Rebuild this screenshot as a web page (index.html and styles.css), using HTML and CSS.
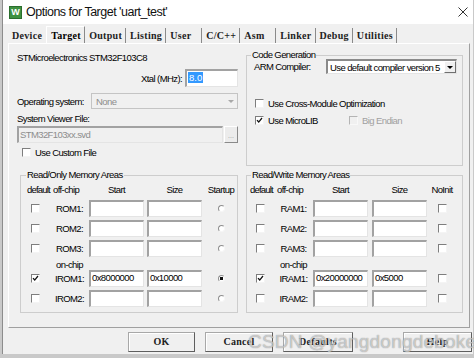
FILE: index.html
```html
<!DOCTYPE html>
<html lang="en">
<head>
    <meta charset="UTF-8">
    <title>Options for Target 'uart_test'</title>
    <link rel="stylesheet" href="styles.css">
</head>
<body>
    <div class="dialog">
        <header class="titlebar">
            <span class="app-icon">W</span>
            <span class="title">Options for Target 'uart_test'</span>
            <svg class="close" width="10" height="10" viewBox="0 0 10 10">
                <path d="M0.5 0.5 L9.5 9.5 M9.5 0.5 L0.5 9.5" stroke="#333" stroke-width="1" fill="none"/>
            </svg>
        </header>

        <nav class="tabs">
            <span class="tab">Device</span>
            <span class="tab active">Target</span>
            <span class="tab">Output</span>
            <span class="tab">Listing</span>
            <span class="tab">User</span>
            <span class="tab">C/C++</span>
            <span class="tab">Asm</span>
            <span class="tab">Linker</span>
            <span class="tab">Debug</span>
            <span class="tab">Utilities</span>
        </nav>

        <section class="panel">
            <div class="top-row">
                <div class="device-col">
                    <div class="device-name">STMicroelectronics STM32F103C8</div>
                    <div class="xtal-row">
                        <span>Xtal (MHz):</span>
                        <span class="field xtal"><span class="selected">8.0</span></span>
                    </div>
                    <div class="os-row">
                        <span>Operating system:</span>
                        <span class="combo disabled">None<span class="combo-btn"><i class="arrow"></i></span></span>
                    </div>
                    <div class="svd-label">System Viewer File:</div>
                    <div class="svd-row">
                        <span class="field disabled svd">STM32F103xx.svd</span>
                        <span class="browse">...</span>
                    </div>
                    <div class="check-row custom">
                        <span class="check"></span>Use Custom File
                    </div>
                </div>

                <fieldset class="group codegen">
                    <legend>Code Generation</legend>
                    <div class="cg-row">
                        <span class="cg-label">ARM Compiler:</span>
                        <span class="combo compiler">Use default compiler version 5<span class="combo-btn"><i class="arrow"></i></span></span>
                    </div>
                    <div class="check-row cross">
                        <span class="check"></span>Use Cross-Module Optimization
                    </div>
                    <div class="opt-pair">
                        <div class="check-row">
                            <span class="check on"><svg viewBox="0 0 9 9"><path d="M1.3 4 L3.5 6.5 L7.7 1.3" stroke="#111" stroke-width="1.7" fill="none"/></svg></span>Use MicroLIB
                        </div>
                        <div class="check-row off">
                            <span class="check dim"></span>Big Endian
                        </div>
                    </div>
                </fieldset>
            </div>

            <div class="mem-row">
                <fieldset class="group mem rom">
                    <legend>Read/Only Memory Areas</legend>
                    <div class="mline head">
                        <span class="h-default">default</span>
                        <span class="h-off">off-chip</span>
                        <span class="h-col">Start</span>
                        <span class="h-col">Size</span>
                        <span class="h-last">Startup</span>
                    </div>
                    <div class="mline first">
                        <span class="check"></span><span class="mlabel">ROM1:</span>
                        <span class="field"></span><span class="field"></span><span class="radio"></span>
                    </div>
                    <div class="mline">
                        <span class="check"></span><span class="mlabel">ROM2:</span>
                        <span class="field"></span><span class="field"></span><span class="radio"></span>
                    </div>
                    <div class="mline">
                        <span class="check"></span><span class="mlabel">ROM3:</span>
                        <span class="field"></span><span class="field"></span><span class="radio"></span>
                    </div>
                    <div class="mline onchip"><span></span><span class="mlabel">on-chip</span></div>
                    <div class="mline tight">
                        <span class="check on"><svg viewBox="0 0 9 9"><path d="M1.3 4 L3.5 6.5 L7.7 1.3" stroke="#111" stroke-width="1.7" fill="none"/></svg></span><span class="mlabel">IROM1:</span>
                        <span class="field">0x8000000</span><span class="field">0x10000</span><span class="radio on"></span>
                    </div>
                    <div class="mline">
                        <span class="check"></span><span class="mlabel">IROM2:</span>
                        <span class="field"></span><span class="field"></span><span class="radio"></span>
                    </div>
                </fieldset>

                <fieldset class="group mem ram">
                    <legend>Read/Write Memory Areas</legend>
                    <div class="mline head">
                        <span class="h-default">default</span>
                        <span class="h-off">off-chip</span>
                        <span class="h-col">Start</span>
                        <span class="h-col">Size</span>
                        <span class="h-last">NoInit</span>
                    </div>
                    <div class="mline first">
                        <span class="check"></span><span class="mlabel">RAM1:</span>
                        <span class="field"></span><span class="field"></span><span class="check"></span>
                    </div>
                    <div class="mline">
                        <span class="check"></span><span class="mlabel">RAM2:</span>
                        <span class="field"></span><span class="field"></span><span class="check"></span>
                    </div>
                    <div class="mline">
                        <span class="check"></span><span class="mlabel">RAM3:</span>
                        <span class="field"></span><span class="field"></span><span class="check"></span>
                    </div>
                    <div class="mline onchip"><span></span><span class="mlabel">on-chip</span></div>
                    <div class="mline tight">
                        <span class="check on"><svg viewBox="0 0 9 9"><path d="M1.3 4 L3.5 6.5 L7.7 1.3" stroke="#111" stroke-width="1.7" fill="none"/></svg></span><span class="mlabel">IRAM1:</span>
                        <span class="field">0x20000000</span><span class="field">0x5000</span><span class="check"></span>
                    </div>
                    <div class="mline">
                        <span class="check"></span><span class="mlabel">IRAM2:</span>
                        <span class="field"></span><span class="field"></span><span class="check"></span>
                    </div>
                </fieldset>
            </div>
        </section>

        <footer class="buttons">
            <span class="btn ok">OK</span>
            <span class="btn cancel">Cancel</span>
            <span class="btn defaults">Defaults</span>
            <span class="btn help">Help</span>
            <span class="watermark">CSDN @yangdongdeboke</span>
        </footer>
    </div>
</body>
</html>
```

FILE: styles.css
```css
* {
    box-sizing: border-box;
    margin: 0;
    padding: 0;
}

body {
    background: #c9c9c9;
    font-family: 'Liberation Sans', Arial, sans-serif;
    font-size: 9.5px;
    letter-spacing: -0.6px;
    color: #000;
}

.dialog {
    width: 471px;
    height: 354px;
    margin-left: 2px;
    border-left: 1px solid #8c8c8c;
    background: #f0f0f0;
    display: flex;
    flex-direction: column;
}

/* Title bar */
.titlebar {
    height: 24px;
    flex: none;
    background: #fff;
    display: flex;
    align-items: center;
    padding: 0 5px 0 6px;
}

.app-icon {
    width: 13px;
    height: 13px;
    background: #3f9141;
    border: 1px solid #2b6e2d;
    color: #fff;
    font: bold 9px 'Liberation Sans', sans-serif;
    letter-spacing: 0;
    display: flex;
    align-items: center;
    justify-content: center;
}

.title {
    margin-left: 4px;
    font-size: 12.5px;
    letter-spacing: -0.5px;
    color: #111;
}

.close {
    margin-left: auto;
}

/* Tabs */
.tabs {
    height: 19px;
    flex: none;
    display: flex;
    align-items: flex-end;
    padding-left: 5px;
    font-family: 'Liberation Serif', serif;
    font-weight: bold;
    font-size: 10px;
    letter-spacing: 0.3px;
}

.tab {
    height: 15px;
    line-height: 15px;
    min-width: 36px;
    padding: 0 3px 0 4px;
    border-right: 1px solid #8a8a8a;
    color: #222;
}

.tab:first-child {
    border-right-color: transparent;
}

.tab.active {
    height: 17px;
    line-height: 17px;
    min-width: 39px;
    border-left: 1px solid #fff;
    border-top: 1px solid #fff;
    color: #000;
}

/* Panel */
.panel {
    flex: none;
    margin-left: 5px;
    width: 462px;
    height: 285px;
    border: 1px solid;
    border-color: #fff #a0a0a0 #a0a0a0 #fff;
}

.top-row {
    display: flex;
    align-items: flex-start;
    gap: 8px;
    padding: 5px 0 0 8px;
}

.device-col {
    width: 221px;
    padding-top: 3px;
}

.device-name {
    height: 12px;
    line-height: 12px;
}

.xtal-row {
    margin-top: 5px;
    height: 18px;
    display: flex;
    align-items: center;
    justify-content: flex-end;
    gap: 3px;
}

.os-row {
    margin-top: 6px;
    height: 16px;
    display: flex;
    align-items: center;
    justify-content: space-between;
}

.svd-label {
    margin-top: 4px;
    height: 12px;
    line-height: 12px;
}

.svd-row {
    margin-top: 1px;
    display: flex;
    gap: 1px;
}

/* Inputs */
.field {
    display: block;
    width: 55px;
    height: 17px;
    background: #fff;
    border-style: solid;
    border-width: 2px 1px 1px 2px;
    border-color: #a2a2a2 #e4e4e4 #e4e4e4 #a2a2a2;
    padding-left: 1px;
    line-height: 12px;
    white-space: nowrap;
    overflow: hidden;
}

.field.xtal {
    width: 53px;
    height: 18px;
    padding: 1px 0 0 1px;
}

.selected {
    display: inline-block;
    background: #3399ff;
    color: #fff;
    line-height: 11px;
    padding: 0 1px;
    letter-spacing: 0;
}

.field.disabled {
    background: #f0f0f0;
    color: #8d8d8d;
}

.field.svd {
    width: 206px;
    height: 17px;
    line-height: 13px;
}

.browse {
    width: 14px;
    height: 17px;
    border: 1px solid;
    border-color: #fff #8a8a8a #8a8a8a #fff;
    background: #ececec;
    color: #999;
    font-size: 7px;
    letter-spacing: 0;
    line-height: 17px;
    text-align: center;
}

.combo {
    display: flex;
    align-items: center;
    padding-left: 4px;
}

.combo.disabled {
    width: 147px;
    height: 16px;
    border: 1px solid #c4c4c4;
    color: #8d8d8d;
}

.combo.compiler {
    width: 131px;
    height: 15px;
    background: #fff;
    border-style: solid;
    border-width: 2px 1px 1px 2px;
    border-color: #8a8a8a #e4e4e4 #e4e4e4 #8a8a8a;
    padding-left: 2px;
    white-space: nowrap;
}

.combo-btn {
    margin-left: auto;
    width: 12px;
    height: 100%;
    display: flex;
    align-items: center;
    justify-content: center;
}

.compiler .combo-btn {
    border: 1px solid;
    border-color: #fff #707070 #707070 #fff;
    background: #f0f0f0;
}

.arrow {
    width: 0;
    height: 0;
    border-left: 3px solid transparent;
    border-right: 3px solid transparent;
    border-top: 3px solid #000;
}

.disabled .arrow {
    border-top-color: #a8a8a8;
}

/* Checkboxes and radios */
.check-row {
    display: flex;
    align-items: center;
    gap: 4px;
    height: 14px;
    white-space: nowrap;
}

.check {
    flex: none;
    display: block;
    width: 9px;
    height: 9px;
    background: #fff;
    border: 1px solid;
    border-color: #7e7e7e #f4f4f4 #f4f4f4 #7e7e7e;
}

.check svg {
    display: block;
    width: 7px;
    height: 7px;
}

.check.dim {
    background: #f0f0f0;
    border-color: #b4b4b4 #f8f8f8 #f8f8f8 #b4b4b4;
}

.check-row.off {
    color: #a0a0a0;
}

.check-row.custom {
    margin-top: 2px;
    padding-left: 5px;
}

.radio {
    display: block;
    width: 7px;
    height: 7px;
    border-radius: 50%;
    border: 1px solid;
    border-color: #8e8e8e #f6f6f6 #f6f6f6 #8e8e8e;
    background: #fff;
    justify-self: center;
}

.radio.on {
    background: radial-gradient(circle, #111 0 1.6px, #fff 2px);
}

/* Group boxes */
.group {
    border: 1px solid #cdcdcd;
    min-width: 0;
}

.group legend {
    padding: 0 1px;
    line-height: 12px;
}

.codegen {
    width: 217px;
    height: 117px;
    padding: 0 4px 0 4px;
}

.cg-row {
    margin-top: -2px;
    padding-left: 3px;
    display: flex;
    align-items: center;
}

.cg-label {
    width: 72px;
}

.check-row.cross {
    margin-top: 22px;
    padding-left: 4px;
}

.opt-pair {
    margin-top: 3px;
    padding-left: 4px;
    display: grid;
    grid-template-columns: 94px auto;
}

.mem-row {
    margin-top: 3px;
    padding-left: 11px;
    display: flex;
    gap: 8px;
}

.mem {
    height: 144px;
}

.rom {
    width: 218px;
    padding-left: 5px;
}

.ram {
    width: 217px;
    padding-left: 4px;
}

.mline {
    display: grid;
    align-items: center;
    height: 17px;
    margin-top: 3px;
}

.rom .mline {
    grid-template-columns: 24px 39px 58px 58px 1fr;
}

.ram .mline {
    grid-template-columns: 23px 39px 59px 58px 24px;
}

.mline.head {
    height: 12px;
    margin-top: 2px;
}

.mline.first {
    margin-top: 5px;
}

.mline.onchip {
    height: 12px;
    margin-top: 1px;
}

.mline.tight {
    margin-top: 0;
}

.mline .check {
    margin-left: 5px;
}

.mline .check:last-child {
    margin-left: 0;
    justify-self: center;
}

.mlabel {
    text-align: center;
}

.h-default {
    white-space: nowrap;
    padding-left: 1px;
    letter-spacing: -0.8px;
}

.ram .h-default {
    margin-left: -2px;
}

.h-off {
    padding-left: 3px;
    white-space: nowrap;
}

.h-col {
    width: 55px;
    text-align: center;
}

.h-last {
    text-align: center;
    white-space: nowrap;
}

/* Buttons */
.buttons {
    position: relative;
    display: flex;
    margin-top: 4px;
    padding-left: 125px;
    font-family: 'Liberation Serif', serif;
    font-weight: bold;
    font-size: 10px;
    letter-spacing: 0.3px;
}

.btn {
    height: 20px;
    line-height: 18px;
    text-align: center;
    border: 1px solid;
    border-color: #a8a8a8 #5e5e5e #5e5e5e #a8a8a8;
    box-shadow: inset 1px 1px #fff;
    background: #f0f0f0;
    color: #222;
}

.ok { width: 67px; }
.cancel { width: 68px; margin-left: 10px; }
.defaults { width: 70px; margin-left: 10px; }
.help { width: 69px; margin-left: 50px; }

.watermark {
    position: absolute;
    left: 245px;
    top: -1px;
    font-family: 'Liberation Sans', sans-serif;
    font-weight: normal;
    font-size: 19px;
    letter-spacing: 0.2px;
    color: rgba(255, 255, 255, 0.55);
    text-shadow: 0 0 1px rgba(90, 90, 90, 0.8);
    white-space: nowrap;
}
```
